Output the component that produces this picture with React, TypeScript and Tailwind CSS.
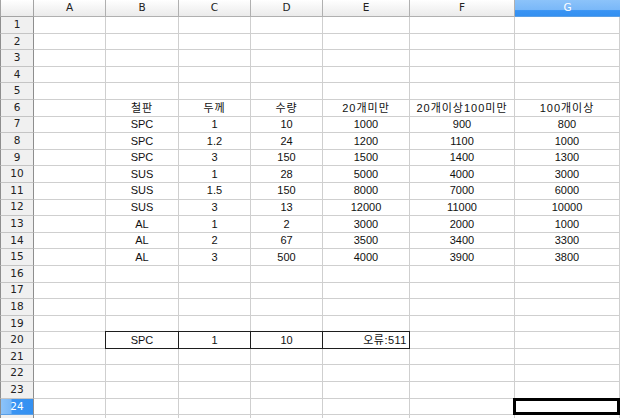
import React from 'react';

const colWidths = ['w-[72px]', 'w-[73px]', 'w-[72px]', 'w-[72px]', 'w-[87px]', 'w-[105px]', 'w-[105px]'];
const colNames = ['A', 'B', 'C', 'D', 'E', 'F', 'G'];

// cell contents keyed by row number, columns A..G
const data: Record<number, string[]> = {
  6: ['', '철판', '두께', '수량', '20개미만', '20개이상100미만', '100개이상'],
  7: ['', 'SPC', '1', '10', '1000', '900', '800'],
  8: ['', 'SPC', '1.2', '24', '1200', '1100', '1000'],
  9: ['', 'SPC', '3', '150', '1500', '1400', '1300'],
  10: ['', 'SUS', '1', '28', '5000', '4000', '3000'],
  11: ['', 'SUS', '1.5', '150', '8000', '7000', '6000'],
  12: ['', 'SUS', '3', '13', '12000', '11000', '10000'],
  13: ['', 'AL', '1', '2', '3000', '2000', '1000'],
  14: ['', 'AL', '2', '67', '3500', '3400', '3300'],
  15: ['', 'AL', '3', '500', '4000', '3900', '3800'],
  20: ['', 'SPC', '1', '10', '오류:511', '', ''],
};

const rows = Array.from({ length: 25 }, (_, i) => i + 1);

export default function App() {
  return (
    <div className="w-[620px] h-[418px] overflow-hidden bg-white text-[11px] text-[#111] font-['Liberation_Sans','Noto_Sans_CJK_KR',sans-serif]">
      {/* Column headers */}
      <div className="flex h-[17px]">
        <div className="w-[34px] shrink-0 border-l border-r border-b border-[#a4a4a4] bg-linear-to-b from-white to-[#ebebeb]" />
        {colNames.map((name, i) =>
          name === 'G' ? (
            <div
              key={name}
              className={`${colWidths[i]} shrink-0 flex items-center justify-center border-b border-[#5a9fe6] text-white font-['DejaVu_Sans',sans-serif] text-[10.5px] bg-[linear-gradient(#8cc3fa_0%,#7ab8f8_60%,#3a94f3_66%,#3390f1_100%)]`}
            >
              {name}
            </div>
          ) : (
            <div
              key={name}
              className={`${colWidths[i]} shrink-0 flex items-center justify-center border-r border-b border-[#b0b0b0] text-[#222] font-['DejaVu_Sans',sans-serif] text-[10.5px] bg-linear-to-b from-white to-[#ebebeb]`}
            >
              {name}
            </div>
          )
        )}
      </div>

      {/* Body rows */}
      {rows.map((r) => {
        const cells = data[r] || [];
        const selected = r === 24;
        return (
          <div key={r} className="flex h-[16.6px]">
            <div
              className={`w-[34px] shrink-0 flex items-center justify-center border-l border-r border-[#8e8e8e] font-['DejaVu_Sans',sans-serif] text-[10.5px] ${
                selected
                  ? 'text-white border-b border-b-[#5a9fe6] bg-[linear-gradient(to_right,#8cc3fa_0%,#7ab8f8_30%,#3a94f3_36%,#3390f1_100%)]'
                  : 'text-[#222] border-b border-b-[#c4c4c4] bg-[#f0f0f0]'
              }`}
            >
              {r < 25 ? r : ''}
            </div>
            {colNames.map((name, i) => {
              const text = cells[i] || '';
              const boxed = r === 20 && i >= 1 && i <= 4;
              const cursor = selected && name === 'G';
              const right = r === 20 && name === 'E';
              return (
                <div
                  key={name}
                  className={`${colWidths[i]} shrink-0 relative flex items-center border-r border-b border-[#cfcfcf] whitespace-nowrap ${
                    right ? 'justify-end pr-[2px] tracking-[0.5px]' : 'justify-center'
                  } ${r === 6 ? 'tracking-[1px]' : ''}`}
                >
                  {text}
                  {boxed && <div className="absolute -top-px -left-px -right-px -bottom-px border border-[#1e1e1e] pointer-events-none" />}
                  {cursor && <div className="absolute -top-px -left-[2px] -right-px -bottom-px border-[3px] border-black pointer-events-none" />}
                </div>
              );
            })}
          </div>
        );
      })}
    </div>
  );
}
